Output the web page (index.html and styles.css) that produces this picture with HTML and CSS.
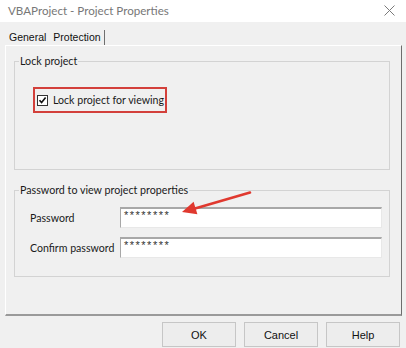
FILE: index.html
```html
<!DOCTYPE html>
<html lang="en">
<head>
    <meta charset="UTF-8">
    <meta name="viewport" content="width=device-width, initial-scale=1.0">
    <title>VBAProject - Project Properties</title>
    <link rel="stylesheet" href="styles.css">
</head>
<body>
    <div class="window">
        <header class="titlebar">
            <span class="title">VBAProject - Project Properties</span>
            <svg class="close" width="11" height="11" viewBox="0 0 11 11">
                <path d="M0.5 0.5 L10.5 10.5 M10.5 0.5 L0.5 10.5" stroke="#7a7a7a" stroke-width="1" fill="none"/>
            </svg>
        </header>

        <nav class="tabs">
            <span class="tab">General</span>
            <span class="tab active">Protection</span>
        </nav>

        <main class="panel">
            <fieldset class="group group-lock">
                <legend>Lock project</legend>
                <label class="check-row">
                    <span class="checkbox">
                        <svg width="9" height="9" viewBox="0 0 9 9">
                            <path d="M1.5 4.2 L3.6 6.6 L7.6 1.6" stroke="#111" stroke-width="1.6" fill="none"/>
                        </svg>
                    </span>
                    Lock project for viewing
                </label>
            </fieldset>

            <fieldset class="group group-pass">
                <legend>Password to view project properties</legend>
                <div class="field-row">
                    <span class="field-label">Password</span>
                    <span class="field">********</span>
                </div>
                <div class="field-row">
                    <span class="field-label">Confirm password</span>
                    <span class="field">********</span>
                </div>
            </fieldset>
        </main>

        <footer class="buttons">
            <button>OK</button>
            <button>Cancel</button>
            <button>Help</button>
        </footer>

        <!-- red callout arrow drawn over the dialog -->
        <svg class="arrow" width="406" height="348" viewBox="0 0 406 348">
            <path d="M250 192.5 L195 208.6" stroke="#e0392f" stroke-width="2.6" stroke-linecap="round" fill="none"/>
            <polygon points="182,212 197.4,214.2 193.6,201.8" fill="#e0392f"/>
        </svg>
    </div>
</body>
</html>
```

FILE: styles.css
```css
body {
    margin: 0;
    padding: 0;
    background-color: #f0f0f0;
    font-family: Lato, "Open Sans", sans-serif;
    color: #1a1a1a;
}

.window {
    position: relative;
    width: 406px;
    height: 348px;
    overflow: hidden;
}

.titlebar {
    height: 22px;
    background-color: #fff;
    display: flex;
    align-items: center;
    justify-content: space-between;
    padding: 0 11px 2px 8px;
    box-sizing: border-box;
}

.title {
    font-size: 11.6px;
    color: #777;
    white-space: nowrap;
}

.close {
    display: block;
}

.tabs {
    height: 23px;
    display: flex;
    align-items: flex-end;
    padding-left: 9px;
    box-sizing: border-box;
    font-family: "Liberation Sans", Arial, sans-serif;
    font-size: 10.5px;
    color: #111;
}

.tab {
    line-height: 15px;
    margin-right: 7px;
    padding-top: 1px;
}

.tab.active {
    margin-right: 0;
    padding-right: 3px;
    border-right: 1px solid #6f6f6f;
    padding-top: 0;
}

.panel {
    margin: 0 4px 0 5px;
    height: 271px;
    box-sizing: border-box;
    border-top: 1px solid #fff;
    border-left: 1px solid #fff;
    border-right: 1px solid #6d6d6d;
    border-bottom: 2px solid #9a9a9a;
    display: flex;
    flex-direction: column;
}

.group {
    border: 1px solid #d3d3d3;
    margin: 0 11px 0 8px;
    padding: 0;
    min-width: 0;
}

.group legend {
    font-size: 10.7px;
    line-height: 14px;
    padding: 0 1px;
    margin-left: 4px;
    white-space: nowrap;
}

.group-lock {
    margin-top: 8px;
    padding-top: 19px;
    padding-bottom: 56px;
}

.check-row {
    display: flex;
    align-items: center;
    gap: 5px;
    width: 134px;
    height: 26px;
    margin-left: 18px;
    box-sizing: border-box;
    border: 2px solid #d3403b;
    padding-left: 2px;
    font-size: 10.6px;
    white-space: nowrap;
}

.checkbox {
    width: 11px;
    height: 11px;
    box-sizing: border-box;
    border: 1px solid #333;
    background-color: #fff;
    display: flex;
    align-items: center;
    justify-content: center;
}

.group-pass {
    margin-top: 13px;
    padding-top: 10px;
    padding-bottom: 18px;
    display: flex;
    flex-direction: column;
    gap: 9px;
}

.field-row {
    display: flex;
    align-items: center;
    margin: 0 7px 0 15px;
}

.field-label {
    width: 90px;
    font-size: 10.6px;
    white-space: nowrap;
}

.field {
    flex: 1;
    height: 21px;
    box-sizing: border-box;
    background-color: #fff;
    border-top: 2px solid #a8a8a8;
    border-left: 1px solid #a8a8a8;
    border-right: 1px solid #e8e8e8;
    border-bottom: 1px solid #e8e8e8;
    padding: 1px 0 0 3px;
    font-family: "Liberation Sans", Arial, sans-serif;
    font-size: 11px;
    letter-spacing: 1.5px;
    line-height: 11px;
    color: #333;
}

.buttons {
    display: flex;
    justify-content: flex-end;
    gap: 8px;
    margin-top: 6px;
    padding-right: 6px;
}

.buttons button {
    width: 74px;
    height: 25px;
    background-color: #ededed;
    border: 1px solid #c6c6c6;
    font-family: "Liberation Sans", Arial, sans-serif;
    font-size: 11px;
    color: #111;
    padding: 0;
}

.arrow {
    position: absolute;
    left: 0;
    top: 0;
    pointer-events: none;
}
```
